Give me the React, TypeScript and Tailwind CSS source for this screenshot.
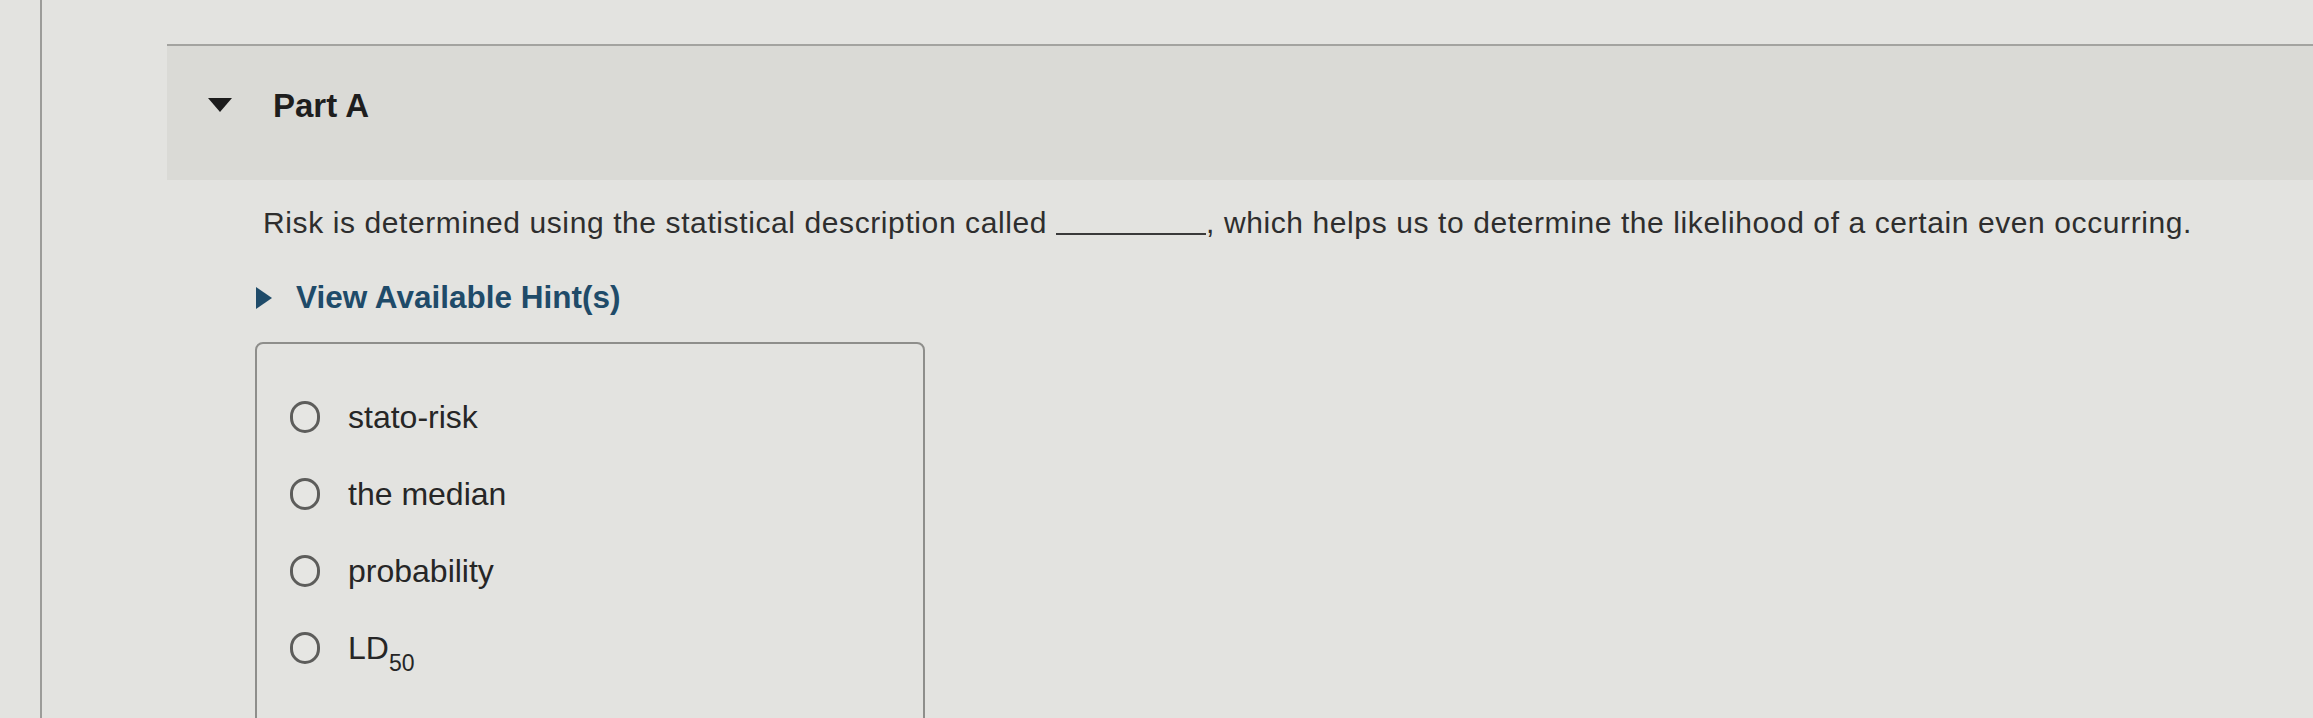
import React from "react";

const options = [
    { id: "a", label: "stato-risk" },
    { id: "b", label: "the median" },
    { id: "c", label: "probability" },
    { id: "d", label: "LD", sub: "50" },
];

export default function App() {
    return (
        <div
            className="w-full h-[718px] overflow-hidden bg-[#e3e3e0] pl-[40px] text-[#2b2b2b]"
            style={{ fontFamily: '"Liberation Sans", Arial, sans-serif' }}
        >
            <div className="h-full border-l-2 border-[#9c9c99] pl-[125px] pt-[44px]">
                {/* Part header */}
                <div className="h-[136px] border-t-2 border-[#a3a3a0] bg-[#dadad6] flex items-center pl-[40px] pb-[16px] gap-[40px]">
                    <svg width="26" height="16" viewBox="0 0 26 16" className="shrink-0">
                        <polygon points="1,1 25,1 13,15" fill="#1c1c1c" />
                    </svg>
                    <h2 className="text-[33px] font-bold text-[#1e1e1e] leading-none">Part A</h2>
                </div>

                <div className="pl-[96px]">
                    <p className="mt-[26px] text-[30px] tracking-[0.6px] leading-[34px] text-[#2e2e2e] whitespace-nowrap">
                        Risk is determined using the statistical description called{" "}
                        <span className="inline-block w-[150px] border-b-2 border-[#3a3a3a] translate-y-[2px]"></span>
                        , which helps us to determine the likelihood of a certain even occurring.
                    </p>

                    <button className="mt-[42px] flex items-center gap-[22px] -ml-[9px]">
                        <svg width="20" height="24" viewBox="0 0 20 24" className="shrink-0">
                            <polygon points="2,1 18,12 2,23" fill="#1f4b69" />
                        </svg>
                        <span className="text-[31.5px] font-bold text-[#1f4b69] leading-none">
                            View Available Hint(s)
                        </span>
                    </button>

                    <div className="mt-[28px] -ml-[8px] w-[670px] h-[420px] border-2 border-[#8e8e8b] rounded-[8px] pl-[33px] pt-[57px] flex flex-col gap-[45px]">
                        {options.map((o) => (
                            <label key={o.id} className="flex items-center gap-[28px] h-[32px]">
                                <span className="w-[30px] h-[32px] rounded-full border-[3px] border-[#5d5d5b] bg-[#e6e6e3] shrink-0"></span>
                                <span className="text-[32px] text-[#262626] leading-none">
                                    {o.label}
                                    {o.sub && <sub className="text-[23px] align-[-7px]">{o.sub}</sub>}
                                </span>
                            </label>
                        ))}
                    </div>
                </div>
            </div>
        </div>
    );
}
